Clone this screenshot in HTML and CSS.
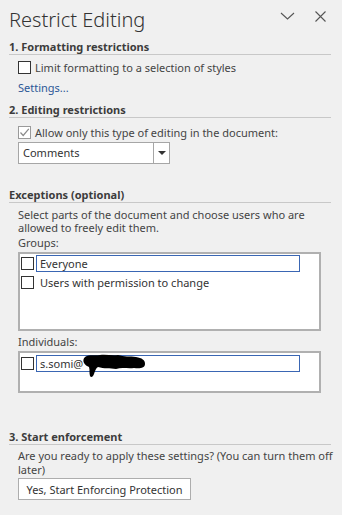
FILE: index.html
```html
<!DOCTYPE html>
<html lang="en">
<head>
    <meta charset="UTF-8">
    <meta name="viewport" content="width=device-width, initial-scale=1.0">
    <title>Restrict Editing</title>
    <link rel="stylesheet" href="styles.css">
</head>
<body>
    <div class="pane">
        <div class="pane-header">
            <h1 class="pane-title">Restrict Editing</h1>
            <div class="pane-actions">
                <svg class="icon-chevron" width="15" height="8" viewBox="0 0 15 8">
                    <path d="M1 1 L7.5 7 L14 1" fill="none" stroke="#555" stroke-width="1.1"/>
                </svg>
                <svg class="icon-close" width="11" height="11" viewBox="0 0 11 11">
                    <path d="M0.5 0.5 L10.5 10.5 M10.5 0.5 L0.5 10.5" fill="none" stroke="#555" stroke-width="1.1"/>
                </svg>
            </div>
        </div>

        <!-- 1. Formatting -->
        <h2 class="section-title first">1. Formatting restrictions</h2>
        <label class="option opt-format">
            <span class="check"></span>
            <span>Limit formatting to a selection of styles</span>
        </label>
        <a class="link" href="#">Settings...</a>

        <!-- 2. Editing -->
        <h2 class="section-title editing">2. Editing restrictions</h2>
        <label class="option opt-editing">
            <span class="check checked">
                <svg width="11" height="11" viewBox="0 0 11 11">
                    <path d="M1.5 5.5 L4.2 8.5 L9.8 1.8" fill="none" stroke="#8a8a8a" stroke-width="1.2"/>
                </svg>
            </span>
            <span>Allow only this type of editing in the document:</span>
        </label>
        <div class="dropdown">
            <span class="dropdown-value">Comments</span>
            <span class="dropdown-arrow"></span>
        </div>

        <h2 class="section-title exceptions">Exceptions (optional)</h2>
        <p class="desc">Select parts of the document and choose users who are allowed to freely edit them.</p>
        <div class="field-label groups-label">Groups:</div>
        <div class="list-box groups">
            <div class="list-row">
                <span class="check"></span>
                <span class="entry selected">Everyone</span>
            </div>
            <div class="list-row">
                <span class="check"></span>
                <span class="entry">Users with permission to change</span>
            </div>
        </div>
        <div class="field-label individuals-label">Individuals:</div>
        <div class="list-box individuals">
            <div class="list-row">
                <span class="check"></span>
                <span class="entry selected">s.somi@</span>
            </div>
            <svg class="redaction" width="66" height="26" viewBox="0 0 66 26">
                <path d="M3 4 C8 1 12 3 18 2 C24 1 30 3 36 2 C42 4 48 3 54 4 C60 5 63 7 63 11 C63 15 58 16 52 15 C46 16 40 14 34 16 C28 15 22 16 16 14 C14 15 13 18 12 21 C11 24 9 25 8 23 C7 20 8 17 7 14 C5 13 3 12 2 10 C1 8 1 6 3 4 Z" fill="#000"/>
            </svg>
        </div>

        <!-- 3. Enforcement -->
        <h2 class="section-title enforce">3. Start enforcement</h2>
        <p class="desc enforce-text">Are you ready to apply these settings? (You can turn them off later)</p>
        <button class="btn" type="button">Yes, Start Enforcing Protection</button>
    </div>
</body>
</html>
```

FILE: styles.css
```css
body {
    margin: 0;
    background-color: #f0f0f0;
    font-family: 'Noto Sans', 'Open Sans', sans-serif;
    font-size: 11px;
    color: #444;
}
.pane {
    width: 342px;
    height: 515px;
    overflow: hidden;
}
.pane-header {
    display: flex;
    align-items: center;
    height: 40px;
    padding-left: 9px;
}
.pane-title {
    margin: 0;
    font-size: 20px;
    font-weight: 300;
    line-height: 36px;
    color: #333;
}
.pane-actions {
    margin-left: auto;
    display: flex;
    align-items: center;
    gap: 20px;
    padding-right: 16px;
    margin-top: -8px;
}
.section-title {
    margin: 0 11px 0 9px;
    height: 14px;
    line-height: 14px;
    font-size: 11px;
    font-weight: 700;
    color: #3c3c3c;
    border-bottom: 1px solid #c8c8c8;
}
.section-title.editing { margin-top: 5px; }
.section-title.exceptions { margin-top: 24px; }
.section-title.enforce { margin-top: 37px; }
.option {
    display: flex;
    align-items: center;
    gap: 4px;
    height: 20px;
    margin-left: 18px;
}
.opt-format { margin-top: 2px; }
.opt-editing { margin-top: 4px; }
.check {
    width: 11px;
    height: 11px;
    border: 1px solid #333;
    background-color: #fff;
    flex: none;
    display: flex;
    align-items: center;
    justify-content: center;
}
.check.checked {
    border-color: #9a9a9a;
}
.link {
    display: block;
    height: 20px;
    line-height: 20px;
    margin-left: 18px;
    margin-top: 1px;
    color: #2b5797;
    text-decoration: none;
    width: max-content;
}
.dropdown {
    display: flex;
    width: 150px;
    height: 20px;
    margin-left: 18px;
    border: 1px solid #a6a6a6;
    background-color: #fff;
}
.dropdown-value {
    flex: 1;
    line-height: 20px;
    padding-left: 4px;
    color: #333;
}
.dropdown-arrow {
    width: 15px;
    border-left: 1px solid #a6a6a6;
    display: flex;
    align-items: center;
    justify-content: center;
}
.dropdown-arrow::after {
    content: "";
    border-left: 4px solid transparent;
    border-right: 4px solid transparent;
    border-top: 4px solid #333;
}
.desc {
    margin: 5px 4px 0 18px;
    line-height: 13px;
}
.field-label {
    margin-left: 18px;
    line-height: 14px;
}
.groups-label { margin-top: 2px; }
.individuals-label { margin-top: 4px; }
.list-box {
    position: relative;
    margin-left: 18px;
    margin-top: 2px;
    border: 2px solid #b0b0b0;
    background-color: #fff;
    padding-left: 1px;
    box-sizing: border-box;
}
.groups { width: 303px; height: 79px; }
.individuals { width: 303px; height: 42px; padding-top: 1px; }
.list-row {
    display: flex;
    align-items: center;
    gap: 2px;
    height: 19px;
}
.entry {
    border: 1px solid transparent;
    width: 259px;
    height: 15px;
    line-height: 15px;
    padding-left: 3px;
    color: #333;
}
.entry.selected {
    border-color: #3a66b3;
}
.redaction {
    position: absolute;
    left: 62px;
    top: 0px;
}
.enforce-text {
    margin-top: 4px;
    line-height: 14px;
}
.btn {
    display: block;
    margin: 1px 0 0 18px;
    width: 173px;
    height: 22px;
    padding: 0;
    border: 1px solid #adadad;
    background-color: #fff;
    font-family: inherit;
    font-size: 11px;
    color: #333;
}
```
